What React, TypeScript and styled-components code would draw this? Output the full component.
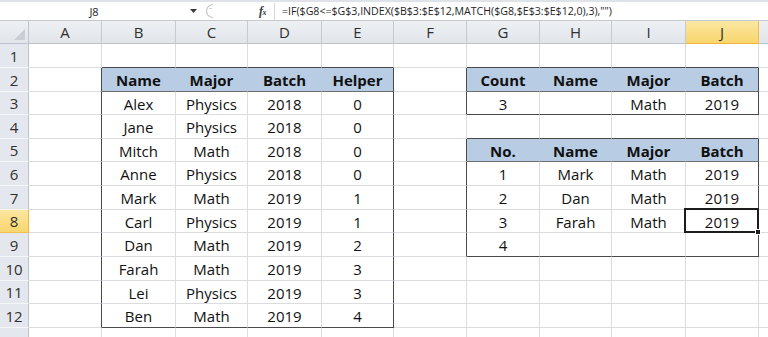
import React from "react";
import styled, { createGlobalStyle } from "styled-components";

const Global = createGlobalStyle`
  html, body { margin: 0; padding: 0; background: #ffffff; }
  body { overflow: hidden; font-family: "Open Sans", "Liberation Sans", sans-serif; }
`;

const COLS = [29, 73, 74, 72, 74, 72, 73, 73, 72, 74, 73, 73];
const ROWS = [24, 24, 23, 24, 23, 24, 24, 23, 24, 24, 23, 24, 24];
const LETTERS = ["A", "B", "C", "D", "E", "F", "G", "H", "I", "J", "K"];

const GRID = "#dadcdf";
const DARK = "#4a4a4a";
const FILL = "#b8cce4";

type Table = { r0: number; r1: number; c0: number; c1: number };
const TABLES: Table[] = [
  { r0: 2, r1: 12, c0: 1, c1: 4 },
  { r0: 2, r1: 3, c0: 6, c1: 9 },
  { r0: 5, r1: 9, c0: 6, c1: 9 },
];

const DATA: Record<string, string> = {};
const put = (r: number, c0: number, vals: string[]) =>
  vals.forEach((v, i) => (DATA[`${r}:${c0 + i}`] = v));

put(2, 1, ["Name", "Major", "Batch", "Helper"]);
const t1 = [
  ["Alex", "Physics", "2018", "0"],
  ["Jane", "Physics", "2018", "0"],
  ["Mitch", "Math", "2018", "0"],
  ["Anne", "Physics", "2018", "0"],
  ["Mark", "Math", "2019", "1"],
  ["Carl", "Physics", "2019", "1"],
  ["Dan", "Math", "2019", "2"],
  ["Farah", "Math", "2019", "3"],
  ["Lei", "Physics", "2019", "3"],
  ["Ben", "Math", "2019", "4"],
];
t1.forEach((row, i) => put(3 + i, 1, row));
put(2, 6, ["Count", "Name", "Major", "Batch"]);
put(3, 6, ["3", "", "Math", "2019"]);
put(5, 6, ["No.", "Name", "Major", "Batch"]);
put(6, 6, ["1", "Mark", "Math", "2019"]);
put(7, 6, ["2", "Dan", "Math", "2019"]);
put(8, 6, ["3", "Farah", "Math", "2019"]);
put(9, 6, ["4", "", "", ""]);

const tableOf = (r: number, c: number) =>
  TABLES.find((t) => r >= t.r0 && r <= t.r1 && c >= t.c0 && c <= t.c1);

const SEL = { r: 8, c: 9 };

const Page = styled.div`
  width: 768px;
  height: 337px;
  overflow: hidden;
  display: flex;
  flex-direction: column;
  background: #ffffff;
`;

const FormulaBar = styled.div`
  height: 21px;
  box-sizing: border-box;
  border-top: 2px solid #dfe3e8;
  border-bottom: 1px solid #c5cad1;
  display: flex;
  align-items: center;
  background: #ffffff;
  flex-shrink: 0;
`;

const NameBox = styled.div`
  width: 188px;
  text-align: center;
  font-size: 11px;
  color: #1e1e1e;
`;

const BarIcon = styled.div<{ $ml: number }>`
  display: flex;
  align-items: center;
  margin-left: ${(p) => p.$ml}px;
`;

const Fx = styled.div`
  margin-left: 44px;
  width: 14px;
  font-family: "Liberation Serif", serif;
  font-style: italic;
  font-weight: bold;
  font-size: 12px;
  color: #3a3a3a;
  letter-spacing: -0.5px;
  small { font-size: 8px; }
`;

const FormulaSep = styled.div`
  width: 1px;
  height: 17px;
  background: #d3d8de;
  margin-left: 1px;
`;

const FormulaText = styled.div`
  margin-left: 7px;
  font-size: 10.6px;
  color: #1e1e1e;
  white-space: nowrap;
`;

const Sheet = styled.div`
  display: grid;
  width: max-content;
  grid-template-columns: ${COLS.map((w) => w + "px").join(" ")};
  grid-template-rows: 23px ${ROWS.map((h) => h + "px").join(" ")};
`;

const Corner = styled.div`
  background: linear-gradient(#eef0f3, #e1e5ea);
  border-right: 1px solid #bcc3cc;
  border-bottom: 1px solid #bcc3cc;
  display: flex;
  align-items: flex-end;
  justify-content: flex-end;
  padding: 0 3px 3px 0;
`;

const ColHead = styled.div<{ $sel?: boolean }>`
  background: ${(p) =>
    p.$sel ? "linear-gradient(#fbe7a2, #f8d66e)" : "linear-gradient(#eef0f3, #e1e5ea)"};
  border-right: 1px solid ${(p) => (p.$sel ? "#f0c04e" : "#c4cad2")};
  border-bottom: 1px solid ${(p) => (p.$sel ? "#f2b43a" : "#bcc3cc")};
  display: flex;
  align-items: center;
  justify-content: center;
  font-size: 15px;
  color: #2f2f2f;
`;

const RowHead = styled.div<{ $sel?: boolean }>`
  background: ${(p) => (p.$sel ? "linear-gradient(#fbe7a2, #f8d66e)" : "#e4e8ee")};
  border-right: 1px solid ${(p) => (p.$sel ? "#f2b43a" : "#bcc3cc")};
  border-bottom: 1px solid ${(p) => (p.$sel ? "#f0c04e" : "#f4f5f7")};
  display: flex;
  align-items: center;
  justify-content: center;
  font-size: 15px;
  color: #2f2f2f;
`;

const Cell = styled.div<{
  $fill?: string;
  $bold?: boolean;
  $right: string;
  $bottom: string;
  $sel?: boolean;
}>`
  position: relative;
  background: ${(p) => p.$fill || "#ffffff"};
  border-right: 1px solid ${(p) => p.$right};
  border-bottom: 1px solid ${(p) => p.$bottom};
  display: flex;
  align-items: center;
  justify-content: center;
  padding-top: 1px;
  font-size: 15px;
  font-weight: ${(p) => (p.$bold ? 700 : 400)};
  color: #111111;
  white-space: nowrap;
  ${(p) =>
    p.$sel &&
    `
    &::after {
      content: "";
      position: absolute;
      top: -2px; left: -2px; right: -1px; bottom: -1px;
      border: 2px solid #1c1c1c;
    }
    &::before {
      content: "";
      position: absolute;
      right: -3px; bottom: -3px;
      width: 4px; height: 4px;
      background: #1c1c1c;
      border: 1px solid #ffffff;
      z-index: 2;
    }
  `}
`;

function cellProps(r: number, c: number) {
  const t = tableOf(r, c);
  const tr = tableOf(r, c + 1);
  const tb = tableOf(r + 1, c);
  const isHeader = !!t && r === t.r0;
  let right = GRID;
  if ((t && c === t.c1) || (tr && c + 1 === tr.c0)) right = DARK;
  else if (isHeader) right = FILL;
  let bottom = GRID;
  if ((t && r === t.r1) || (tb && r + 1 === tb.r0)) bottom = DARK;
  else if (isHeader) bottom = "#6d6d6d";
  return { right, bottom, fill: isHeader ? FILL : undefined, bold: isHeader };
}

export default function App() {
  const rows = ROWS.map((_, i) => i + 1);
  return (
    <Page>
      <Global />
      <FormulaBar>
        <NameBox>J8</NameBox>
        <BarIcon $ml={2}>
          <svg width="7" height="4" viewBox="0 0 7 4">
            <path d="M0 0 L7 0 L3.5 4 Z" fill="#3a3a3a" />
          </svg>
        </BarIcon>
        <BarIcon $ml={7}>
          <svg width="11" height="16" viewBox="0 0 11 16">
            <path d="M9 1.5 A 6.5 6.5 0 0 0 9 14.5" fill="none" stroke="#c2c7cd" strokeWidth="1.2" />
            <path d="M5 5.5 L8 5.5" stroke="#d0d4d9" strokeWidth="1" />
          </svg>
        </BarIcon>
        <Fx>
          f<small>x</small>
        </Fx>
        <FormulaSep />
        <FormulaText>=IF($G8&lt;=$G$3,INDEX($B$3:$E$12,MATCH($G8,$E$3:$E$12,0),3),"")</FormulaText>
      </FormulaBar>
      <Sheet>
        <Corner>
          <svg width="11" height="11" viewBox="0 0 11 11">
            <path d="M11 0 L11 11 L0 11 Z" fill="#c9ced5" />
          </svg>
        </Corner>
        {LETTERS.map((l, i) => (
          <ColHead key={l} $sel={i === SEL.c}>
            {i < 10 ? l : ""}
          </ColHead>
        ))}
        {rows.map((r) => (
          <React.Fragment key={r}>
            <RowHead $sel={r === SEL.r}>{r <= 12 ? r : ""}</RowHead>
            {LETTERS.map((_, c) => {
              const p = cellProps(r, c);
              return (
                <Cell
                  key={c}
                  $fill={p.fill}
                  $bold={p.bold}
                  $right={p.right}
                  $bottom={p.bottom}
                  $sel={r === SEL.r && c === SEL.c}
                >
                  {DATA[`${r}:${c}`] || ""}
                </Cell>
              );
            })}
          </React.Fragment>
        ))}
      </Sheet>
    </Page>
  );
}
